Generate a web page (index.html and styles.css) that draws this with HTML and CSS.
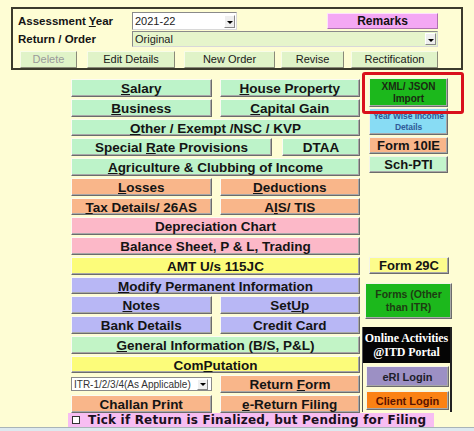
FILE: index.html
```html
<!DOCTYPE html>
<html>
<head>
<meta charset="utf-8">
<link rel="stylesheet" href="styles.css">
</head>
<body>
<div class="panel">
  <div class="prow r1">
    <span class="lbl">Assessment <u>Y</u>ear</span>
    <div class="sel sel-year"><span class="val">2021-22</span><span class="arr"></span></div>
    <div class="remarks">Remarks</div>
  </div>
  <div class="prow r2">
    <span class="lbl">Return / Order</span>
    <div class="sel sel-order"><span class="val">Original</span><span class="arr"></span></div>
  </div>
  <div class="prow r3">
    <div class="tb tb-del dis">Delete</div>
    <div class="tb tb-edit">Edit Details</div>
    <div class="tb tb-new">New Order</div>
    <div class="tb tb-rev">Revise</div>
    <div class="tb tb-rect">Rectification</div>
  </div>
</div>

<div class="main">
  <div class="left">
    <div class="row half"><div class="b mint"><u>S</u>alary</div><div class="b mint"><u>H</u>ouse Property</div></div>
    <div class="row half"><div class="b mint"><u>B</u>usiness</div><div class="b mint"><u>C</u>apital Gain</div></div>
    <div class="row"><div class="b mint"><u>O</u>ther / Exempt /NSC / KVP</div></div>
    <div class="row spec"><div class="b mint">Special <u>R</u>ate Provisions</div><div class="b mint">DTAA</div></div>
    <div class="row"><div class="b mint"><u>A</u>griculture &amp; Clubbing of Income</div></div>
    <div class="row half"><div class="b orange"><u>L</u>osses</div><div class="b orange"><u>D</u>eductions</div></div>
    <div class="row half"><div class="b orange"><u>T</u>ax Details/ 26AS</div><div class="b orange">A<u>I</u>S/ TIS</div></div>
    <div class="row"><div class="b pink">Depreciation Chart</div></div>
    <div class="row"><div class="b pink">Balance Sheet, P &amp; L, Trading</div></div>
    <div class="row"><div class="b yellow">AMT U/s 115JC</div></div>
    <div class="row"><div class="b lav"><u>M</u>odify Permanent Information</div></div>
    <div class="row half"><div class="b lav"><u>N</u>otes</div><div class="b lav">Set<u>U</u>p</div></div>
    <div class="row half"><div class="b lav">Bank Details</div><div class="b lav">Credit Card</div></div>
    <div class="row"><div class="b gen"><u>G</u>eneral Information (B/S, P&amp;L)</div></div>
    <div class="row"><div class="b yellow">Com<u>P</u>utation</div></div>
    <div class="row half">
      <div class="isel"><div class="sel sel-itr"><span class="val">ITR-1/2/3/4(As Applicable)</span><span class="arr"></span></div></div>
      <div class="b orange">Return <u>F</u>orm</div>
    </div>
    <div class="row half"><div class="b orange">Challan Print</div><div class="b orange"><u>e</u>-Return Filing</div></div>
  </div>

  <div class="right">
    <div class="rb xml">XML/ JSON<br>Import</div>
    <div class="rb yw">Year Wise Income<br>Details</div>
    <div class="rb f10">Form 10IE</div>
    <div class="rb pti">Sch-PTI</div>
    <div class="rb f29">Form 29C</div>
    <div class="rb fo">Forms (Other<br>than ITR)</div>
    <div class="online">
      <div class="ohead">Online Activities<br>@ITD Portal</div>
      <div class="rb eri">eRI Login</div>
      <div class="rb cl">Client Login</div>
    </div>
  </div>
</div>

<div class="tick">
  <span class="chk"></span><span class="ttxt">Tick if Return is Finalized, but Pending for Filing</span>
</div>
<div class="strip"></div>

<div class="hl"></div>
</body>
</html>
```

FILE: styles.css
```css
* { box-sizing: border-box; }
html, body { margin: 0; padding: 0; }
body {
  width: 474px;
  height: 431px;
  overflow: hidden;
  background: #fefdd4;
  font-family: "Liberation Sans", Arial, sans-serif;
  color: #111;
  position: relative;
}
u { text-decoration: underline; text-underline-offset: 1px; }

/* top panel */
.panel {
  margin: 7px 0 0 11px;
  width: 452px;
  height: 63px;
  border: 2px solid #3b3a2c;
  padding: 3px 0 0 5px;
}
.prow { display: flex; align-items: center; }
.r1 { height: 18px; }
.r2 { height: 16px; margin-top: 1px; }
.r3 { height: 17px; margin-top: 4px; }
.lbl {
  width: 114px;
  font-weight: bold;
  font-size: 11.5px;
  color: #141414;
}
.sel {
  display: flex;
  align-items: center;
  border: 1px solid #8a8a8a;
  border-right-color: #d8d8d8;
  border-bottom-color: #d8d8d8;
  background: #fff;
  font-size: 11px;
  color: #222;
  padding-left: 2px;
}
.sel .val { flex: 1; white-space: nowrap; overflow: hidden; }
.sel .arr {
  width: 11px;
  height: 13px;
  margin-right: 1px;
  background: #efefef;
  border: 1px solid;
  border-color: #fff #888 #888 #fff;
  position: relative;
}
.sel .arr::after {
  content: "";
  position: absolute;
  left: 2px;
  top: 5px;
  border-left: 3px solid transparent;
  border-right: 3px solid transparent;
  border-top: 3px solid #000;
}
.sel-year { width: 105px; height: 18px; }
.sel-order { width: 306px; height: 16px; background: #e6f5cb; }
.sel-order .arr { height: 12px; }
.remarks {
  margin-left: 90px;
  width: 111px;
  height: 16px;
  background: #f4a8f4;
  border: 1px solid;
  border-color: #fde2fd #b070b0 #b070b0 #fde2fd;
  font-weight: bold;
  font-size: 12px;
  text-align: center;
  line-height: 14px;
}
.tb {
  height: 17px;
  background: #e0f3c8;
  border: 1px solid;
  border-color: #f8fce8 #8a8a78 #8a8a78 #f8fce8;
  font-size: 11px;
  text-align: center;
  line-height: 15px;
  color: #1a1a1a;
}
.tb.dis { color: #9a9a9a; }
.tb-del { margin-left: 2px; width: 57px; }
.tb-edit { margin-left: 10px; width: 88px; }
.tb-new { margin-left: 9px; width: 91px; }
.tb-rev { margin-left: 6px; width: 63px; }
.tb-rect { margin-left: 7px; width: 87px; }

/* main */
.main {
  display: flex;
  align-items: flex-start;
  margin-top: 9px;
}
.left {
  margin-left: 71px;
  width: 289px;
  display: grid;
  grid-auto-rows: 17.75px;
  row-gap: 2px;
}
.row { display: flex; }
.row > .b { flex: 1; }
.row.half { gap: 8px; }
.row.half > * { flex: 1 1 0; }
.row.spec { gap: 10px; }
.row.spec > .b:first-child { flex: 0 0 201px; }

.b {
  display: block;
  text-align: center;
  font-weight: bold;
  font-size: 13.5px;
  line-height: 15px;
  white-space: nowrap;
  color: #141414;
  border: 1px solid;
  border-color: #fbfbf2 #6c6c6c #6c6c6c #fbfbf2;
  box-shadow: inset -1px -1px 0 #a8a8a8;
  padding-top: 1px;
  overflow: hidden;
}
.mint { background: #bdf3c9; }
.orange { background: #f9b68a; }
.pink { background: #fcb8c8; }
.yellow { background: #fcfc7a; }
.lav { background: #b8b7f5; }
.gen { background: #c2f4c6; }

.isel { display: flex; align-items: center; }
.sel-itr {
  width: 141px;
  height: 14px;
  font-size: 10px;
  color: #333;
  border-color: #8a8a8a;
}
.sel-itr .arr { height: 11px; margin-right: 3px; }
.sel-itr .arr::after { top: 3px; }

/* right column */
.right {
  margin-left: 2px;
  margin-top: -1px;
  width: 91px;
  display: flex;
  flex-direction: column;
}
.rb {
  display: flex;
  align-items: center;
  justify-content: center;
  text-align: center;
  font-weight: bold;
  border: 1px solid;
  border-color: #f4f4e8 #6c6c6c #6c6c6c #f4f4e8;
  box-shadow: inset -1px -1px 0 #a8a8a8;
  color: #141414;
}
.xml {
  margin-left: 7px;
  width: 79px;
  height: 29px;
  background: #1cb81c;
  font-size: 10px;
  line-height: 12px;
  color: #1a2a12;
}
.yw {
  margin: 1px 0 0 7px;
  width: 79px;
  height: 27px;
  background: #88dcf4;
  font-size: 8.5px;
  line-height: 10.5px;
  color: #2f5a98;
  white-space: nowrap;
  letter-spacing: -0.1px;
}
.f10 {
  margin: 2px 0 0 7px;
  width: 79px;
  height: 17px;
  background: #f9b68a;
  font-size: 13px;
}
.pti {
  margin: 2px 0 0 7px;
  width: 79px;
  height: 17px;
  background: #c3f4cc;
  font-size: 13px;
}
.f29 {
  margin: 84px 0 0 7px;
  width: 80px;
  height: 17px;
  background: #fcfc8c;
  font-size: 13px;
}
.fo {
  margin: 9px 0 0 3px;
  width: 87px;
  height: 36px;
  background: #1cb81c;
  font-size: 10.5px;
  line-height: 13px;
  color: #1d3d12;
}
.online {
  margin-top: 8px;
  width: 90px;
  border-right: 2px solid #222;
  border-left: 1px solid #555;
  padding-bottom: 2px;
}
.ohead {
  height: 36px;
  background: #050505;
  color: #fff;
  font-family: "Liberation Serif", "Times New Roman", serif;
  font-weight: bold;
  font-size: 12px;
  line-height: 14px;
  text-align: center;
  white-space: nowrap;
  padding-top: 4px;
  letter-spacing: -0.1px;
}
.eri {
  margin: 3px 0 0 3px;
  width: 83px;
  height: 21px;
  background: #9c90c4;
  font-size: 11px;
  color: #1e1e2a;
}
.cl {
  margin: 4px 0 0 3px;
  width: 83px;
  height: 19px;
  background: #fb8214;
  font-size: 11px;
  color: #5a1200;
}

/* tick row */
.tick {
  position: absolute;
  left: 68px;
  top: 413px;
  width: 366px;
  height: 14px;
  background: #f7bdf2;
  display: flex;
  align-items: center;
}
.chk {
  flex: 0 0 auto;
  width: 8px;
  height: 8px;
  border: 1px solid #333;
  background: #fff;
  margin: 0 8px 0 4px;
}
.ttxt {
  flex: 0 0 auto;
  font-family: "DejaVu Sans", Verdana, sans-serif;
  font-weight: bold;
  font-size: 12px;
  letter-spacing: 0.2px;
  color: #1a1020;
  white-space: nowrap;
}
.strip {
  position: absolute;
  left: 0;
  top: 427px;
  width: 474px;
  height: 4px;
  background: #dde9ef;
  border-top: 1px solid #a9b4b8;
}

/* red annotation overlay */
.hl {
  position: absolute;
  left: 362px;
  top: 72px;
  width: 102px;
  height: 42px;
  border: 3px solid #d9101c;
  border-radius: 3px;
}
```
